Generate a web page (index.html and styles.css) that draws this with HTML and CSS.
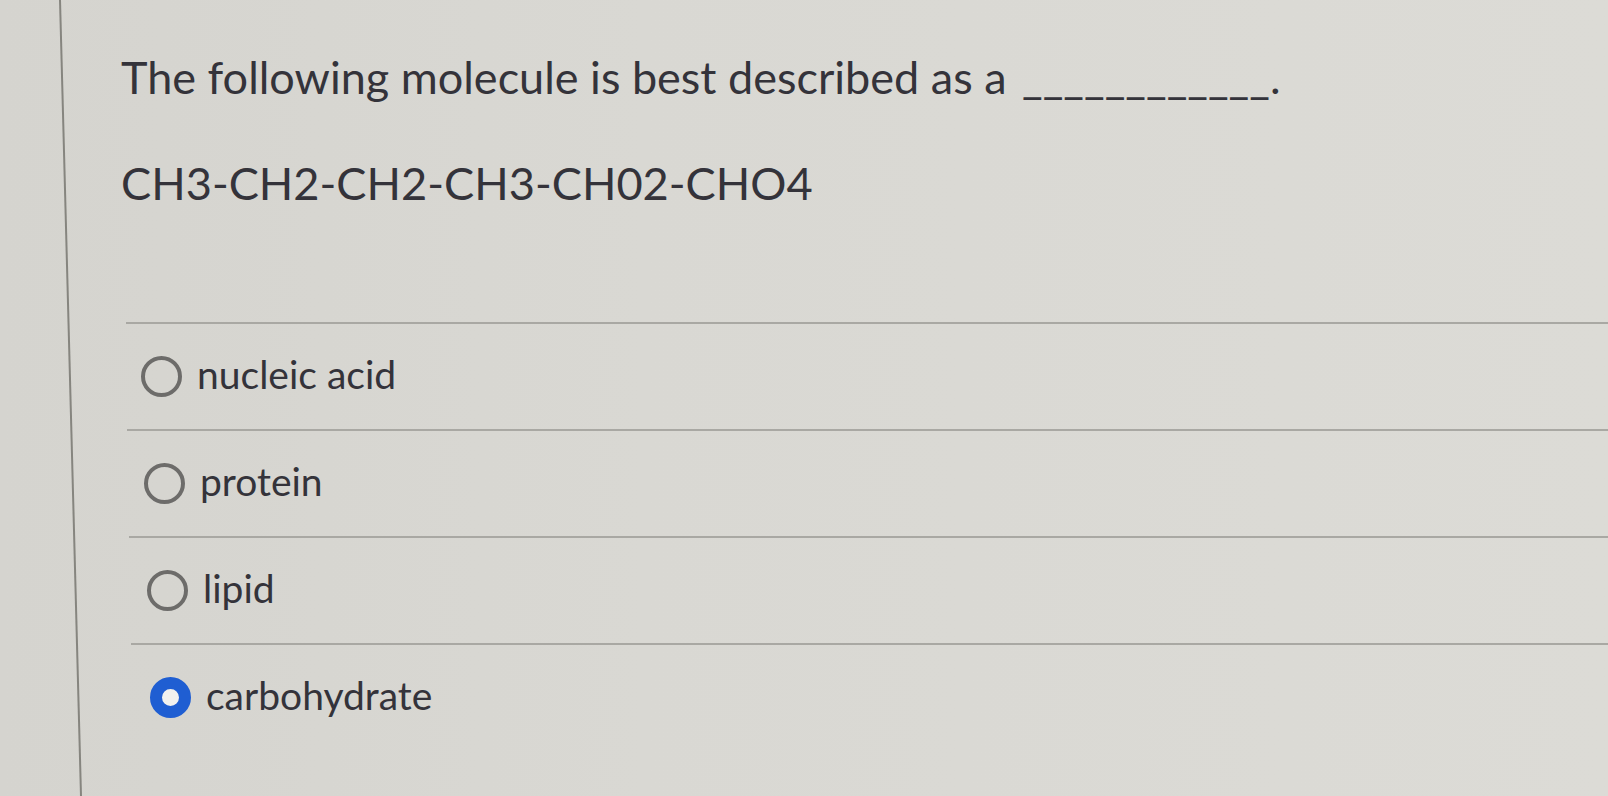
FILE: index.html
```html
<!DOCTYPE html>
<html lang="en">
<head>
<meta charset="utf-8">
<title>Question</title>
<link rel="stylesheet" href="styles.css">
</head>
<body>
<div class="page">
  <div class="gutter">
    <svg class="edge" viewBox="0 0 84 796" preserveAspectRatio="none" aria-hidden="true">
      <line x1="60" y1="0" x2="81" y2="796" stroke="#86857f" stroke-width="2"/>
    </svg>
  </div>
  <main class="question">
    <p class="prompt">The following molecule is best described as a <span class="blank">____________</span>.</p>
    <p class="formula">CH3-CH2-CH2-CH3-CH02-CHO4</p>
    <ul class="answers">
      <li class="answer"><span class="radio"></span><span class="label">nucleic acid</span></li>
      <li class="answer"><span class="radio"></span><span class="label">protein</span></li>
      <li class="answer"><span class="radio"></span><span class="label">lipid</span></li>
      <li class="answer selected"><span class="radio"></span><span class="label">carbohydrate</span></li>
    </ul>
  </main>
</div>
</body>
</html>
```

FILE: styles.css
```css
html, body {
  margin: 0;
  padding: 0;
  height: 100%;
}
body {
  background: linear-gradient(90deg, #d5d4cf 0%, #d9d8d3 40%, #dcdbd6 100%);
  font-family: Lato, "Open Sans", sans-serif;
  color: #34333a;
  overflow: hidden;
}
.page {
  display: flex;
  min-height: 796px;
}
.gutter {
  width: 84px;
  flex: 0 0 84px;
  height: 796px;
}
.edge {
  display: block;
  width: 84px;
  height: 796px;
}
.question {
  flex: 1;
  padding-top: 51px;
  padding-left: 37px;
}
.prompt {
  margin: 0;
  font-size: 45px;
  line-height: 53px;
}
.blank {
  margin-left: 4px;
}
.formula {
  margin: 52px 0 0;
  font-size: 45.2px;
  line-height: 53px;
}
.answers {
  list-style: none;
  margin: 113px 0 0 5px;
  padding: 0;
}
.answer {
  display: flex;
  align-items: center;
  gap: 15px;
  height: 107px;
  border-top: 2px solid #a9a8a3;
  padding-left: 15px;
  box-sizing: border-box;
}
.answer:nth-child(2) {
  margin-left: 1px;
  padding-left: 17px;
}
.answer:nth-child(3) {
  margin-left: 3px;
  padding-left: 18px;
}
.answer:nth-child(4) {
  margin-left: 5px;
  padding-left: 19px;
}
.radio {
  width: 41px;
  height: 41px;
  box-sizing: border-box;
  border: 4px solid #6d6c6a;
  border-radius: 50%;
  flex: 0 0 auto;
}
.selected .radio {
  border: 12.5px solid #1f5ed2;
  background: #f1f1ef;
}
.label {
  font-size: 39px;
  line-height: 47px;
  padding-bottom: 4px;
}
```
